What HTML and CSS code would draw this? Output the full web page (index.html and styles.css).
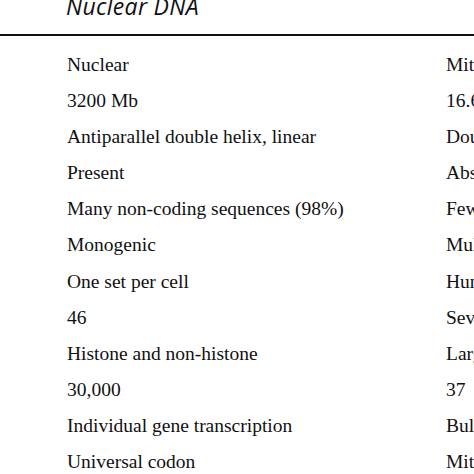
FILE: index.html
```html
<!DOCTYPE html>
<html>
<head>
<meta charset="utf-8">
<link rel="stylesheet" href="styles.css">
</head>
<body>
<div class="page">
  <div class="head"><span class="title">Nuclear DNA</span></div>
  <div class="table">
    <div class="row"><div class="c1">Nuclear</div><div class="c2">Mitochondrial</div></div>
    <div class="row"><div class="c1">3200 Mb</div><div class="c2">16.6 kb</div></div>
    <div class="row"><div class="c1">Antiparallel double helix, linear</div><div class="c2">Double helix, circular</div></div>
    <div class="row"><div class="c1">Present</div><div class="c2">Absent</div></div>
    <div class="row"><div class="c1">Many non-coding sequences (98%)</div><div class="c2">Few non-coding sequences</div></div>
    <div class="row"><div class="c1">Monogenic</div><div class="c2">Multigenic</div></div>
    <div class="row"><div class="c1">One set per cell</div><div class="c2">Hundreds per cell</div></div>
    <div class="row"><div class="c1">46</div><div class="c2">Several</div></div>
    <div class="row"><div class="c1">Histone and non-histone</div><div class="c2">Large</div></div>
    <div class="row"><div class="c1">30,000</div><div class="c2">37</div></div>
    <div class="row"><div class="c1">Individual gene transcription</div><div class="c2">Bulk transcription</div></div>
    <div class="row"><div class="c1">Universal codon</div><div class="c2">Mitochondrial codon</div></div>
  </div>
</div>
</body>
</html>
```
FILE: styles.css
```css
html, body {
  margin: 0;
  padding: 0;
  background: #fff;
  overflow: hidden;
}
.page {
  width: 474px;
  height: 474px;
  overflow: hidden;
  color: #111;
}
.head {
  height: 34px;
  border-bottom: 2px solid #111;
  padding-left: 66px;
  box-sizing: content-box;
  overflow: hidden;
}
.title {
  display: block;
  font-family: "Open Sans", sans-serif;
  font-style: italic;
  font-size: 23px;
  line-height: 23px;
  letter-spacing: 0.3px;
  margin-top: -5px;
  white-space: nowrap;
}
.table {
  padding-top: 11px;
  font-family: "Liberation Serif", "Times New Roman", serif;
  font-size: 19.5px;
  line-height: 36.1px;
}
.row {
  display: grid;
  grid-template-columns: 67px 379px auto;
  white-space: nowrap;
}
.c1 {
  grid-column: 2;
}
.c2 {
  grid-column: 3;
}
```
